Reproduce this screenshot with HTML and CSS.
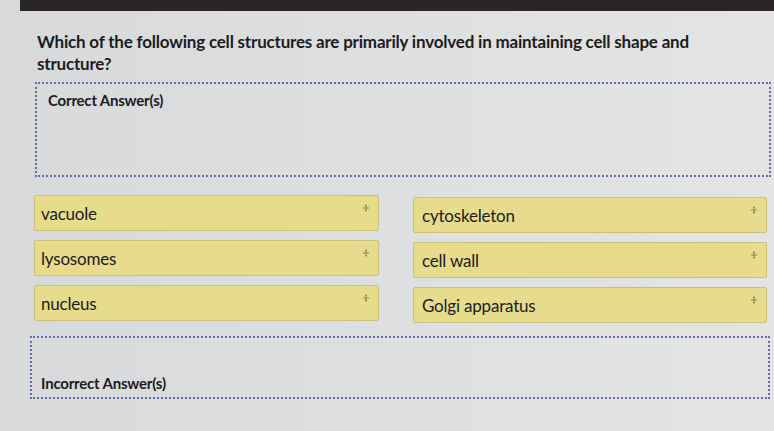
FILE: index.html
```html
<!DOCTYPE html>
<html>
<head>
<meta charset="utf-8">
<link rel="stylesheet" href="styles.css">
</head>
<body>
<div class="topbar"></div>
<div class="question">Which of the following cell structures are primarily involved in maintaining cell shape and<br>structure?</div>
<div class="box correct"><div class="box-title">Correct Answer(s)</div></div>
<div class="answers">
  <div class="item">vacuole<svg class="drag" viewBox="0 0 10 10"><path d="M5 1v8M1 5h8" stroke="#7a7050" stroke-width="1"/><circle cx="5" cy="1.5" r="1" fill="#7a7050"/><circle cx="5" cy="8.5" r="1" fill="#7a7050"/></svg></div>
  <div class="item right">cytoskeleton<svg class="drag" viewBox="0 0 10 10"><path d="M5 1v8M1 5h8" stroke="#7a7050" stroke-width="1"/><circle cx="5" cy="1.5" r="1" fill="#7a7050"/><circle cx="5" cy="8.5" r="1" fill="#7a7050"/></svg></div>
  <div class="item">lysosomes<svg class="drag" viewBox="0 0 10 10"><path d="M5 1v8M1 5h8" stroke="#7a7050" stroke-width="1"/><circle cx="5" cy="1.5" r="1" fill="#7a7050"/><circle cx="5" cy="8.5" r="1" fill="#7a7050"/></svg></div>
  <div class="item right">cell wall<svg class="drag" viewBox="0 0 10 10"><path d="M5 1v8M1 5h8" stroke="#7a7050" stroke-width="1"/><circle cx="5" cy="1.5" r="1" fill="#7a7050"/><circle cx="5" cy="8.5" r="1" fill="#7a7050"/></svg></div>
  <div class="item">nucleus<svg class="drag" viewBox="0 0 10 10"><path d="M5 1v8M1 5h8" stroke="#7a7050" stroke-width="1"/><circle cx="5" cy="1.5" r="1" fill="#7a7050"/><circle cx="5" cy="8.5" r="1" fill="#7a7050"/></svg></div>
  <div class="item right">Golgi apparatus<svg class="drag" viewBox="0 0 10 10"><path d="M5 1v8M1 5h8" stroke="#7a7050" stroke-width="1"/><circle cx="5" cy="1.5" r="1" fill="#7a7050"/><circle cx="5" cy="8.5" r="1" fill="#7a7050"/></svg></div>
</div>
<div class="box incorrect"><div class="box-title">Incorrect Answer(s)</div></div>
</body>
</html>
```
FILE: styles.css
```css
html, body {
  margin: 0;
  padding: 0;
}
body {
  width: 774px;
  height: 431px;
  overflow: hidden;
  background: linear-gradient(90deg, #d8d9da 0%, #dedfe0 50%, #e3e4e3 100%);
  font-family: Lato, "Open Sans", sans-serif;
  color: #1c1c1e;
}
.topbar {
  margin-left: 20px;
  height: 11px;
  background: #2b2527;
}
.question {
  margin: 20px 0 0 37px;
  font-size: 17px;
  font-weight: 700;
  line-height: 22px;
  letter-spacing: -0.2px;
}
.box {
  border: 2px dotted #5c72a6;
  box-sizing: border-box;
}
.box-title {
  font-size: 15px;
  font-weight: 700;
  letter-spacing: -0.2px;
}
.correct {
  margin: 7px 3px 0 35px;
  height: 95px;
  padding: 7px 0 0 11px;
}
.answers {
  margin: 18px 0 0 34px;
  display: grid;
  grid-template-columns: 345px 354px;
  column-gap: 34px;
  row-gap: 9px;
}
.item {
  position: relative;
  height: 36px;
  box-sizing: border-box;
  background: #e7db8c;
  border: 1px solid #cdbf7c;
  border-radius: 2px;
  font-size: 17px;
  padding: 7px 0 0 6px;
  letter-spacing: -0.2px;
}
.item.right {
  top: 2px;
  padding-left: 8px;
}
.drag {
  position: absolute;
  right: 8px;
  top: 8px;
  width: 8px;
  height: 8px;
}
.incorrect {
  margin: 15px 4px 0 30px;
  height: 63px;
  padding: 36px 0 0 9px;
}
```
